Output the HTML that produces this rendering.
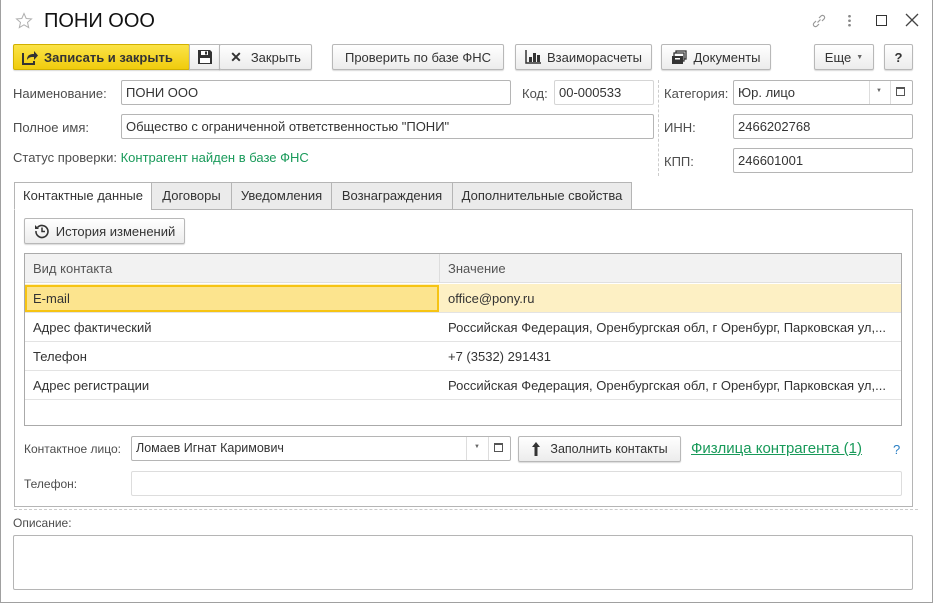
<!DOCTYPE html>
<html><head><meta charset="utf-8"><style>
*{box-sizing:border-box;margin:0;padding:0}
body{width:933px;height:603px;background:#fff;font-family:"Liberation Sans",Arial,sans-serif;font-size:13px;color:#333;position:relative;overflow:hidden}
.a{position:absolute}
.win{left:0;top:0;width:933px;height:603px;border:1px solid #a0a0a0;border-top:none}
.btn{position:absolute;height:26px;border:1px solid #b8b8b8;border-radius:2px;background:linear-gradient(#fff,#ececec);box-shadow:0 1px 1px rgba(0,0,0,.15);display:flex;align-items:center;justify-content:center;color:#333;font-size:13px;white-space:nowrap}
.inp{position:absolute;height:25px;border:1px solid #b5b5b5;border-radius:2px;background:#fff;padding-left:4px;line-height:23px;font-size:13px;color:#333;white-space:nowrap}
.lbl{position:absolute;color:#4d4d4d;font-size:13px;white-space:nowrap}
.tab{position:absolute;top:182px;height:28px;border:1px solid #b5b5b5;background:#ebebeb;line-height:26px;text-align:center;color:#333}
.row{position:absolute;left:25px;width:876px;height:29px;border-bottom:1px solid #e3e3e3;line-height:29px}
.row span{position:absolute}
</style></head><body>
<div class="a win"></div>
<svg class="a" style="left:15px;top:12px" width="18" height="18" viewBox="0 0 18 18"><path d="M9 1.5l2.2 5 5.3.4-4 3.5 1.2 5.2L9 12.8l-4.7 2.8 1.2-5.2-4-3.5 5.3-.4z" fill="none" stroke="#b0b0b0" stroke-width="1"/></svg>
<div class="a" style="left:44px;top:10px;font-size:20px;color:#111">ПОНИ ООО</div>
<svg class="a" style="left:810px;top:12px" width="18" height="18" viewBox="0 0 18 18"><path d="M7.5 10.5l3-3M6 9l-2 2a2.1 2.1 0 0 0 3 3l2-2M12 9l2-2a2.1 2.1 0 0 0-3-3l-2 2" fill="none" stroke="#999" stroke-width="1.2"/></svg>
<div class="a" style="left:848px;top:14px;width:3px;height:14px;background:radial-gradient(circle,#888 1.2px,transparent 1.5px) 0 0/3px 4.5px"></div>
<div class="a" style="left:876px;top:15px;width:11px;height:11px;border:1.5px solid #333"></div>
<svg class="a" style="left:905px;top:13px" width="14" height="14"><path d="M1 1l12 12M13 1L1 13" stroke="#444" stroke-width="1.3"/></svg>

<div class="btn" style="left:13px;top:44px;width:177px;background:linear-gradient(#fbe347,#f0cc0d);border-color:#d1b000;font-weight:bold;color:#333;justify-content:flex-start;padding-left:8px">
<svg width="16" height="16" viewBox="0 0 16 16" style="margin-right:6px"><path d="M1 4v11h11v-3" fill="none" stroke="#333" stroke-width="2"/><path d="M5 11c0-5 3-6 7-6V2l4 4.5L12 11V8c-3 0-5 0-7 3z" fill="#333"/></svg>Записать и закрыть</div>
<div class="btn" style="left:189px;top:44px;width:31px;border-radius:0"><svg width="16" height="16" viewBox="0 0 16 16"><path d="M1 1h12l2 2v12H1z" fill="#333"/><rect x="4" y="2" width="7" height="4" fill="#fff"/><rect x="3" y="9" width="10" height="5" fill="#fff"/><rect x="8" y="2.5" width="2" height="3" fill="#333"/></svg></div>
<div class="btn" style="left:219px;top:44px;width:93px"><span style="font-weight:bold;margin-right:9px;font-size:14px">✕</span>Закрыть</div>
<div class="btn" style="left:332px;top:44px;width:172px">Проверить по базе ФНС</div>
<div class="btn" style="left:515px;top:44px;width:137px"><svg width="16" height="14" viewBox="0 0 16 14" style="margin-right:6px"><path d="M1 0v13h15" fill="none" stroke="#333" stroke-width="1.5"/><rect x="4" y="7" width="3" height="5" fill="#333"/><rect x="8" y="3" width="3" height="9" fill="#333"/><rect x="12" y="5" width="3" height="7" fill="#333"/></svg>Взаиморасчеты</div>
<div class="btn" style="left:661px;top:44px;width:110px"><svg width="16" height="15" viewBox="0 0 16 15" style="margin-right:6px"><rect x="5" y="1" width="10" height="8" fill="none" stroke="#333" stroke-width="1.3"/><rect x="3" y="3" width="10" height="8" fill="#fff" stroke="#333" stroke-width="1.3"/><rect x="1" y="6" width="11" height="8" fill="#333"/><rect x="4" y="8" width="5" height="1.5" fill="#fff"/></svg>Документы</div>
<div class="btn" style="left:814px;top:44px;width:60px">Еще <span style="font-size:7px;margin-left:5px;color:#666">▼</span></div>
<div class="btn" style="left:884px;top:44px;width:29px;font-weight:bold">?</div>

<div class="lbl" style="left:13px;top:86px">Наименование:</div>
<div class="inp" style="left:121px;top:80px;width:390px">ПОНИ ООО</div>
<div class="lbl" style="left:522px;top:86px">Код:</div>
<div class="inp" style="left:554px;top:80px;width:100px;border-color:#d5d5d5">00-000533</div>
<div class="a" style="left:658px;top:80px;height:96px;border-left:1px dashed #ccc"></div>
<div class="lbl" style="left:664px;top:86px">Категория:</div>
<div class="inp" style="left:733px;top:80px;width:180px">Юр. лицо</div>
<div class="a" style="left:869px;top:81px;width:1px;height:23px;background:#ddd"></div>
<div class="a" style="left:876px;top:88px;font-size:6px;color:#666">▼</div>
<div class="a" style="left:890px;top:81px;width:1px;height:23px;background:#ddd"></div>
<div class="a" style="left:896px;top:87px;width:9px;height:9px;border:1px solid #555;border-top-width:2px;background:#fff"></div>
<div class="lbl" style="left:13px;top:120px">Полное имя:</div>
<div class="inp" style="left:121px;top:114px;width:533px">Общество с ограниченной ответственностью "ПОНИ"</div>
<div class="lbl" style="left:664px;top:120px">ИНН:</div>
<div class="inp" style="left:733px;top:114px;width:180px">2466202768</div>
<div class="lbl" style="left:13px;top:150px">Статус проверки: <span style="color:#199a5a">Контрагент найден в базе ФНС</span></div>
<div class="lbl" style="left:664px;top:154px">КПП:</div>
<div class="inp" style="left:733px;top:148px;width:180px">246601001</div>

<div class="a" style="left:14px;top:209px;width:899px;height:298px;border:1px solid #b5b5b5"></div>
<div class="tab" style="left:14px;width:138px;background:#fff;border-bottom-color:#fff">Контактные данные</div>
<div class="tab" style="left:151px;width:81px">Договоры</div>
<div class="tab" style="left:231px;width:101px">Уведомления</div>
<div class="tab" style="left:331px;width:122px">Вознаграждения</div>
<div class="tab" style="left:452px;width:180px">Дополнительные свойства</div>

<div class="btn" style="left:24px;top:218px;width:161px"><svg width="16" height="16" viewBox="0 0 16 16" style="margin-right:6px"><path d="M3.5 4.5A6 6 0 1 1 2 8" fill="none" stroke="#333" stroke-width="1.6"/><path d="M1 2v4h4z" fill="#333"/><path d="M8 4.5V8.5h3" fill="none" stroke="#333" stroke-width="1.5"/></svg>История изменений</div>

<div class="a" style="left:24px;top:253px;width:878px;height:173px;border:1px solid #aaa"></div>
<div class="a" style="left:25px;top:254px;width:876px;height:29px;background:#f2f2f2;border-bottom:1px solid #e0e0e0"></div>
<div class="a" style="left:439px;top:254px;width:1px;height:29px;background:#ddd"></div>
<div class="lbl" style="left:33px;top:261px;color:#555">Вид контакта</div>
<div class="lbl" style="left:448px;top:261px;color:#555">Значение</div>
<div class="row" style="top:284px;background:#fdf0c4"><span style="left:0;top:1px;width:414px;height:27px;background:#fce48e;border:2px solid #f6c413"></span><span style="left:8px">E-mail</span><span style="left:423px">office@pony.ru</span></div>
<div class="row" style="top:313px"><span style="left:8px">Адрес фактический</span><span style="left:423px">Российская Федерация, Оренбургская обл, г Оренбург, Парковская ул,...</span></div>
<div class="row" style="top:342px"><span style="left:8px">Телефон</span><span style="left:423px">+7 (3532) 291431</span></div>
<div class="row" style="top:371px"><span style="left:8px">Адрес регистрации</span><span style="left:423px">Российская Федерация, Оренбургская обл, г Оренбург, Парковская ул,...</span></div>

<div class="lbl" style="left:24px;top:442px;font-size:12px">Контактное лицо:</div>
<div class="inp" style="left:131px;top:436px;width:380px;font-size:12.5px">Ломаев Игнат Каримович</div>
<div class="a" style="left:466px;top:437px;width:1px;height:23px;background:#ddd"></div>
<div class="a" style="left:474px;top:444px;font-size:6px;color:#666">▼</div>
<div class="a" style="left:488px;top:437px;width:1px;height:23px;background:#ddd"></div>
<div class="a" style="left:494px;top:443px;width:9px;height:9px;border:1px solid #555;border-top-width:2px"></div>
<div class="btn" style="left:518px;top:436px;width:163px;font-size:12.5px"><svg width="10" height="14" viewBox="0 0 10 14" style="margin-right:9px"><path d="M5 0L9 5H6.5v9h-3V5H1z" fill="#333"/></svg>Заполнить контакты</div>
<div class="a" style="left:691px;top:440px;font-size:15px;color:#199a5a;text-decoration:underline">Физлица контрагента (1)</div>
<div class="a" style="left:893px;top:442px;color:#2a7fc4;font-size:13px">?</div>
<div class="lbl" style="left:24px;top:477px;font-size:12px">Телефон:</div>
<div class="inp" style="left:131px;top:471px;width:771px;border-color:#ddd"></div>

<div class="a" style="left:14px;top:509px;width:904px;border-top:1px dashed #ccc"></div>
<div class="lbl" style="left:13px;top:516px;font-size:12px">Описание:</div>
<div class="inp" style="left:13px;top:535px;width:900px;height:55px"></div>
</body></html>
